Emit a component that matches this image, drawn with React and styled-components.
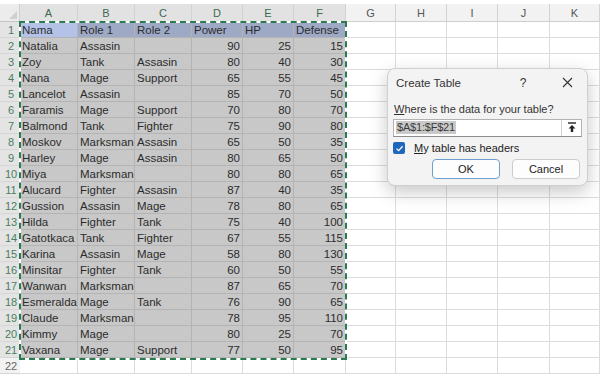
import React from "react";
import styled, { createGlobalStyle } from "styled-components";

const GlobalStyle = createGlobalStyle`
  html, body {
    margin: 0;
    padding: 0;
    background: #ffffff;
    overflow: hidden;
  }
  body {
    font-family: "Liberation Sans", Arial, sans-serif;
  }
`;

const COLS = [20, 58, 57, 57, 51, 51, 52, 50, 51, 51, 52, 50];
const LETTERS = ["A", "B", "C", "D", "E", "F", "G", "H", "I", "J", "K"];

const rows = [
  ["Nama", "Role 1", "Role 2", "Power", "HP", "Defense"],
  ["Natalia", "Assasin", "", 90, 25, 15],
  ["Zoy", "Tank", "Assasin", 80, 40, 30],
  ["Nana", "Mage", "Support", 65, 55, 45],
  ["Lancelot", "Assasin", "", 85, 70, 50],
  ["Faramis", "Mage", "Support", 70, 80, 70],
  ["Balmond", "Tank", "Fighter", 75, 90, 80],
  ["Moskov", "Marksman", "Assasin", 65, 50, 35],
  ["Harley", "Mage", "Assasin", 80, 65, 50],
  ["Miya", "Marksman", "", 80, 80, 65],
  ["Alucard", "Fighter", "Assasin", 87, 40, 35],
  ["Gussion", "Assasin", "Mage", 78, 80, 65],
  ["Hilda", "Fighter", "Tank", 75, 40, 100],
  ["Gatotkaca", "Tank", "Fighter", 67, 55, 115],
  ["Karina", "Assasin", "Mage", 58, 80, 130],
  ["Minsitar", "Fighter", "Tank", 60, 50, 55],
  ["Wanwan", "Marksman", "", 87, 65, 70],
  ["Esmeralda", "Mage", "Tank", 76, 90, 65],
  ["Claude", "Marksman", "", 78, 95, 110],
  ["Kimmy", "Mage", "", 80, 25, 70],
  ["Vaxana", "Mage", "Support", 77, 50, 95],
];

const Page = styled.div`
  position: relative;
  width: 600px;
  height: 378px;
  overflow: hidden;
  padding-top: 4px;
  box-sizing: border-box;
`;

const Sheet = styled.div`
  display: grid;
  grid-template-columns: ${COLS.map((c) => c + "px").join(" ")};
  grid-template-rows: 18px;
  grid-auto-rows: 16px;
  font-size: 11.5px;
  color: #2c2c2c;
`;

const Corner = styled.div`
  background: #ececec;
  border-right: 1px solid #d0d0d0;
  border-bottom: 1px solid #c4c4c4;
  position: relative;
  &::after {
    content: "";
    position: absolute;
    right: 2px;
    bottom: 2px;
    width: 0;
    height: 0;
    border-left: 8px solid transparent;
    border-bottom: 8px solid #cfcfcf;
  }
`;

const ColHead = styled.div`
  display: flex;
  align-items: center;
  justify-content: center;
  background: ${({ $sel }) => ($sel ? "#e2e2e2" : "#f2f2f2")};
  color: ${({ $sel }) => ($sel ? "#3d6b50" : "#555555")};
  border-right: 1px solid #d2d2d2;
  border-bottom: 1px solid ${({ $sel }) => ($sel ? "#8fb39c" : "#cfcfcf")};
  font-size: 11px;
`;

const RowHead = styled.div`
  display: flex;
  align-items: center;
  justify-content: center;
  padding-left: 2px;
  background: ${({ $sel }) => ($sel ? "#e4e4e4" : "#f2f2f2")};
  color: ${({ $sel }) => ($sel ? "#4b7d60" : "#666666")};
  border-bottom: 1px solid #d6d6d6;
  font-size: 11px;
`;

const Cell = styled.div`
  display: flex;
  align-items: center;
  justify-content: ${({ $num }) => ($num ? "flex-end" : "flex-start")};
  padding: 0 2px;
  white-space: nowrap;
  overflow: ${({ $clip }) => ($clip ? "hidden" : "visible")};
  background: ${({ $bg }) => $bg};
  border-right: 1px solid ${({ $sel }) => ($sel ? "#b4b4b4" : "#dcdcdc")};
  border-bottom: 1px solid ${({ $sel }) => ($sel ? "#b4b4b4" : "#dcdcdc")};
  position: relative;
  z-index: ${({ $over }) => ($over ? 1 : 0)};
`;

const MarchWhite = styled.div`
  position: absolute;
  left: 19px;
  top: 21px;
  width: 328px;
  height: 339px;
  box-sizing: border-box;
  border: 2px solid #ffffff;
  pointer-events: none;
  z-index: 2;
`;

const MarchGreen = styled.div`
  position: absolute;
  inset: -2px;
  border: 2px dashed #2a7b4f;
`;

const Dialog = styled.div`
  position: absolute;
  left: 387px;
  top: 68px;
  width: 201px;
  height: 118px;
  box-sizing: border-box;
  background: #f3f3f3;
  border: 1px solid #cfcfcf;
  border-radius: 8px;
  box-shadow: 0 6px 18px rgba(0, 0, 0, 0.22);
  padding: 0 5px 6px 5px;
  display: flex;
  flex-direction: column;
  font-size: 11px;
  color: #222222;
  z-index: 5;
`;

const TitleBar = styled.div`
  display: flex;
  align-items: center;
  height: 27px;
  padding-left: 3px;
  padding-top: 1px;
`;

const Title = styled.div`
  flex: 1;
  font-size: 11.5px;
  color: #333333;
`;

const HelpMark = styled.div`
  width: 18px;
  text-align: center;
  font-size: 12px;
  margin-right: 26px;
  color: #333333;
`;

const CloseBtn = styled.div`
  width: 18px;
  display: flex;
  justify-content: center;
  margin-right: 6px;
`;

const Label = styled.div`
  margin-top: 7px;
  padding-left: 1px;
  color: #333333;
  u {
    text-decoration-thickness: 1px;
  }
`;

const RangeBox = styled.div`
  margin-top: 4px;
  height: 19px;
  box-sizing: border-box;
  border: 1px solid #b2b2b2;
  border-bottom-color: #8c8c8c;
  background: #ffffff;
  display: flex;
  align-items: stretch;
`;

const RangeText = styled.div`
  flex: 1;
  display: flex;
  align-items: center;
  padding-left: 2px;
  span {
    background: #c9c9c9;
    color: #3a3a3a;
    padding: 0 1px;
    line-height: 13px;
    letter-spacing: -0.2px;
  }
`;

const PickBtn = styled.div`
  width: 19px;
  border-left: 1px solid #d0d0d0;
  display: flex;
  align-items: center;
  justify-content: center;
`;

const CheckRow = styled.div`
  display: flex;
  align-items: center;
  margin-top: 5px;
  gap: 9px;
`;

const CheckBox = styled.div`
  width: 12px;
  height: 12px;
  border-radius: 2px;
  background: #1f66bd;
  display: flex;
  align-items: center;
  justify-content: center;
`;

const ButtonRow = styled.div`
  display: flex;
  justify-content: flex-end;
  gap: 12px;
  margin-top: 5px;
  padding-right: 2px;
`;

const Button = styled.div`
  width: ${({ $w }) => $w}px;
  height: 20px;
  box-sizing: border-box;
  background: #fdfdfd;
  border: 1px solid ${({ $primary }) => ($primary ? "#6f9fd0" : "#cccccc")};
  border-radius: 4px;
  display: flex;
  align-items: center;
  justify-content: center;
  color: #222222;
`;

function SheetGrid() {
  const cells = [];
  cells.push(<Corner key="corner" />);
  LETTERS.forEach((l, i) => {
    cells.push(
      <ColHead key={"h" + l} $sel={i < 6}>
        {l}
      </ColHead>
    );
  });
  for (let r = 0; r < 22; r++) {
    const data = rows[r];
    const sel = r < 21;
    cells.push(
      <RowHead key={"r" + r} $sel={sel}>
        {r + 1}
      </RowHead>
    );
    for (let c = 0; c < 11; c++) {
      const inRange = sel && c < 6;
      let value = inRange ? data[c] : "";
      let bg = "#ffffff";
      if (inRange) bg = "#c8c8c8";
      if (r === 0 && c < 6) bg = c === 0 ? "#b4c2e8" : "#9ea9c6";
      const num = typeof value === "number";
      cells.push(
        <Cell
          key={r + "-" + c}
          $sel={inRange}
          $bg={bg}
          $num={num}
          $clip={c > 0}
          $over={c === 0}
        >
          {value}
        </Cell>
      );
    }
  }
  return <Sheet>{cells}</Sheet>;
}

function CreateTableDialog() {
  return (
    <Dialog>
      <TitleBar>
        <Title>Create Table</Title>
        <HelpMark>?</HelpMark>
        <CloseBtn>
          <svg width="11" height="11" viewBox="0 0 11 11">
            <path d="M1 1 L10 10 M10 1 L1 10" stroke="#333" strokeWidth="1.1" fill="none" />
          </svg>
        </CloseBtn>
      </TitleBar>
      <Label>
        <u>W</u>here is the data for your table?
      </Label>
      <RangeBox>
        <RangeText>
          <span>$A$1:$F$21</span>
        </RangeText>
        <PickBtn>
          <svg width="10" height="11" viewBox="0 0 10 11">
            <path d="M1 1 H9" stroke="#222" strokeWidth="1.4" />
            <path d="M5 3 L1.5 6.5 H3.8 V10 H6.2 V6.5 H8.5 Z" fill="#222" />
          </svg>
        </PickBtn>
      </RangeBox>
      <CheckRow>
        <CheckBox>
          <svg width="9" height="9" viewBox="0 0 9 9">
            <path d="M1.5 4.6 L3.6 6.6 L7.6 2.2" stroke="#fff" strokeWidth="1.3" fill="none" />
          </svg>
        </CheckBox>
        <div>
          <u>M</u>y table has headers
        </div>
      </CheckRow>
      <ButtonRow>
        <Button $w={68} $primary>
          OK
        </Button>
        <Button $w={68}>Cancel</Button>
      </ButtonRow>
    </Dialog>
  );
}

export default function App() {
  return (
    <>
      <GlobalStyle />
      <Page>
        <SheetGrid />
        <MarchWhite>
          <MarchGreen />
        </MarchWhite>
        <CreateTableDialog />
      </Page>
    </>
  );
}
